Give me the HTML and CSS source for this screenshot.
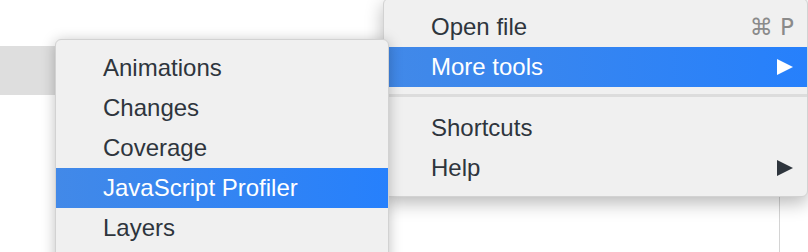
FILE: index.html
```html
<!DOCTYPE html>
<html lang="en">
<head>
    <meta charset="UTF-8">
    <title>Menu</title>
    <link rel="stylesheet" href="styles.css">
</head>
<body>
    <div class="page">
        <div class="main">
            <div class="band"></div>
        </div>
        <div class="sidebar"></div>
    </div>

    <div class="menu main-menu">
        <div class="item"><span class="label">Open file</span><span class="shortcut">&#8984; P</span></div>
        <div class="item selected"><span class="label">More tools</span>
            <svg class="arrow" width="16" height="16" viewBox="0 0 16 16"><polygon points="0,0 16,8 0,16"/></svg>
        </div>
        <div class="separator"></div>
        <div class="item"><span class="label">Shortcuts</span></div>
        <div class="item"><span class="label">Help</span>
            <svg class="arrow" width="16" height="16" viewBox="0 0 16 16"><polygon points="0,0 16,8 0,16"/></svg>
        </div>
    </div>

    <div class="menu sub-menu">
        <div class="item"><span class="label">Animations</span></div>
        <div class="item"><span class="label">Changes</span></div>
        <div class="item"><span class="label">Coverage</span></div>
        <div class="item selected"><span class="label">JavaScript Profiler</span></div>
        <div class="item"><span class="label">Layers</span></div>
    </div>
</body>
</html>
```

FILE: styles.css
```css
body, html {
    margin: 0;
    padding: 0;
    width: 100%;
    height: 100%;
    background: #ffffff;
    overflow: hidden;
    font-family: "Liberation Sans", Arial, sans-serif;
}

.page {
    display: flex;
    height: 100%;
}

.main {
    flex: 1;
    padding-top: 46px;
}

.band {
    height: 49px;
    background: #dedede;
}

.sidebar {
    width: 28px;
    border-left: 1px solid #d4d4d4;
}

.menu {
    position: absolute;
    box-sizing: border-box;
    background: #f0f0f0;
    border: 1px solid #d2d2d2;
    border-radius: 6px;
    padding: 8px 0;
    color: #2e353d;
    font-size: 24px;
}

.main-menu {
    left: 383px;
    top: -2px;
    width: 425px;
    box-shadow: 0 6px 18px rgba(0, 0, 0, 0.28);
    z-index: 1;
}

.sub-menu {
    left: 55px;
    top: 39px;
    width: 334px;
    padding-bottom: 30px;
    box-shadow: 0 2px 14px rgba(0, 0, 0, 0.25);
    z-index: 2;
}

.item {
    display: flex;
    align-items: center;
    height: 40px;
    line-height: 40px;
    padding: 0 13px 0 47px;
}

.item .label {
    flex: 1;
    white-space: nowrap;
}

.item.selected {
    background: linear-gradient(to right, #4289e8, #2680fc);
    color: #ffffff;
}

.shortcut {
    color: #8a8a8a;
    font-family: "DejaVu Sans", "Liberation Sans", sans-serif;
    font-size: 23px;
}

.arrow {
    fill: #2e353d;
    margin-right: 1px;
}

.selected .arrow {
    fill: #ffffff;
}

.separator {
    height: 3px;
    margin: 7px 0 11px;
    background: #dcdcdc;
}
```
